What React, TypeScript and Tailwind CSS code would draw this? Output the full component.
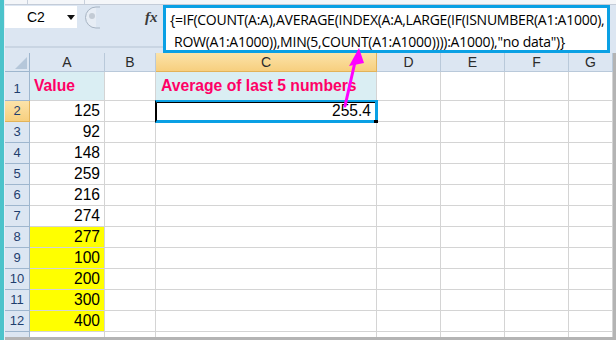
import React from "react";

const values = [125, 92, 148, 259, 216, 274, 277, 100, 200, 300, 400];
const letters = ["A", "B", "C", "D", "E", "F", "G"];

const gridCols = "grid grid-cols-[25px_75px_51px_221px_64px_64px_64px_44px]";

function Cell({ className = "", children }: { className?: string; children?: React.ReactNode }) {
  return (
    <div className={"border-r border-b border-[#d4d4d4] box-border " + className}>{children}</div>
  );
}

export default function App() {
  return (
    <div className="relative w-[616px] h-[340px] overflow-hidden bg-white font-['Liberation_Sans',Arial,sans-serif]">
      <div className="flex h-full">
        <div className="w-[4px] h-full bg-[#4cc3cb]" />
        <div className="w-[1px] h-full bg-[#e6eef6]" />
        <div className="flex flex-col flex-1 min-w-0">
          {/* ribbon bottom strip */}
          <div className="relative h-[5px] bg-[#f4f6f9] border-b border-[#c4ccd8] box-border flex">
            <div className="w-[23px] border-r border-[#c8d0dc]" />
            <div className="w-[57px] border-r border-[#c8d0dc]" />
          </div>
          {/* formula bar */}
          <div className="h-[48px] bg-[#dce6f2] flex relative">
            <div className="w-[158px] shrink-0 flex flex-col">
              <div className="flex items-start h-[43px] border-b-2 border-[#c9d5e3]">
                <div className="mt-[1px] w-[72px] h-[22px] bg-white flex items-center relative">
                  <span className="ml-[22px] text-[14px] text-black">C2</span>
                  <svg className="absolute left-[62px] top-[9px]" width="8" height="5" viewBox="0 0 8 5">
                    <path d="M0 0 L8 0 L4 5 Z" fill="#111" />
                  </svg>
                </div>
                <svg width="20" height="24" viewBox="0 0 20 24" className="ml-[3px] mt-[1px]">
                  <path d="M16 1 A10.5 10.5 0 0 0 16 22" fill="#e7edf5" stroke="#a7b4c3" strokeWidth="1" />
                  <path d="M16 1 L20 1 M16 22 L20 22" stroke="#a7b4c3" strokeWidth="1" />
                  <circle cx="12" cy="10" r="3" fill="#c3cbd5" />
                </svg>
                <span className="ml-[45px] mt-[1px] text-[15px] leading-[22px] italic font-bold text-[#3a3a3a] font-['Liberation_Serif',serif]">
                  fx
                </span>
              </div>
            </div>
            <div className="w-[447px] shrink-0 h-[48px] border-[3px] border-[#0aa0e4] bg-white box-border pl-[4px] pt-[1px] font-['Open_Sans',sans-serif] text-[14px] tracking-[-0.25px] leading-[22px] text-black whitespace-nowrap overflow-hidden">
              <div>{"{=IF(COUNT(A:A),AVERAGE(INDEX(A:A,LARGE(IF(ISNUMBER(A1:A1000),"}</div>
              <div className="pl-[4px]">{'ROW(A1:A1000)),MIN(5,COUNT(A1:A1000)))):A1000),"no data")}'}</div>
            </div>
          </div>
          {/* spreadsheet grid */}
          <div className="h-[284px] overflow-hidden">
            <div className={gridCols}>
              {/* header row */}
              <div className="h-[19px] bg-[#dce6f2] border-r border-b border-[#9eb6ce] relative">
                <svg className="absolute right-[2px] bottom-[2px]" width="12" height="12" viewBox="0 0 12 12">
                  <path d="M12 0 L12 12 L0 12 Z" fill="#b5c7da" />
                </svg>
              </div>
              {letters.map((l) => (
                <div
                  key={l}
                  className={
                    "h-[19px] border-r border-b flex items-center justify-center text-[14px] text-[#2b2b2b] " +
                    (l === "C"
                      ? "bg-gradient-to-b from-[#fbe3a9] to-[#f7cf7e] border-[#e2b35a]"
                      : "bg-[#dce6f2] border-[#b9c9da]")
                  }
                >
                  {l}
                </div>
              ))}
              {/* row 1 */}
              <div className="h-[29px] bg-[#dce6f2] border-r border-b border-[#9eb6ce] flex items-end justify-center pb-[2px] text-[13px] text-[#1f3e6e]">
                1
              </div>
              <Cell className="h-[29px] bg-[#daeef3] flex items-end pl-[4px] pb-[2px]">
                <span className="text-[15.7px] font-bold text-[#ff0066]">Value</span>
              </Cell>
              <Cell className="h-[29px]" />
              <Cell className="h-[29px] bg-[#daeef3] flex items-end pl-[5px] pb-[2px]">
                <span className="text-[15.7px] font-bold text-[#ff0066] whitespace-nowrap">Average of last 5 numbers</span>
              </Cell>
              <Cell className="h-[29px]" />
              <Cell className="h-[29px]" />
              <Cell className="h-[29px]" />
              <Cell className="h-[29px]" />
              {/* rows 2 - 12 */}
              {values.map((v, i) => {
                const row = i + 2;
                const yellow = row >= 8;
                return (
                  <React.Fragment key={row}>
                    <div
                      className={
                        "h-[21px] border-r border-b flex items-center justify-center text-[13px] " +
                        (row === 2
                          ? "bg-gradient-to-b from-[#fbe3a9] to-[#f7cf7e] border-[#e2b35a] text-[#1f3e6e]"
                          : "bg-[#dce6f2] border-[#9eb6ce] text-[#1f3e6e]")
                      }
                    >
                      {row}
                    </div>
                    <Cell
                      className={
                        "h-[21px] flex items-center justify-end pr-[4px] text-[15.6px] text-black " +
                        (yellow ? "bg-[#ffff00]" : "")
                      }
                    >
                      {v}
                    </Cell>
                    <Cell className="h-[21px]" />
                    {row === 2 ? (
                      <Cell className="h-[21px] relative flex items-center justify-end pr-[5px] text-[15.6px] text-black">
                        <div className="absolute -left-[1px] -top-[1px] -right-[2px] -bottom-[2px] border-[3px] border-[#0aa0e4] border-l-[2px] border-l-black" />
                        <div className="absolute left-[1px] top-[1px] right-[1px] h-[1px] bg-black" />
                        <div className="absolute -right-[2px] -bottom-[2px] w-[4px] h-[3px] bg-black" />
                        <span className="relative">255.4</span>
                      </Cell>
                    ) : (
                      <Cell className="h-[21px]" />
                    )}
                    <Cell className="h-[21px]" />
                    <Cell className="h-[21px]" />
                    <Cell className="h-[21px]" />
                    <Cell className="h-[21px]" />
                  </React.Fragment>
                );
              })}
              {/* row 13 partial */}
              <div className="h-[21px] bg-[#dce6f2] border-r border-[#9eb6ce]" />
              <Cell className="h-[21px]" />
              <Cell className="h-[21px]" />
              <Cell className="h-[21px]" />
              <Cell className="h-[21px]" />
              <Cell className="h-[21px]" />
              <Cell className="h-[21px]" />
              <Cell className="h-[21px]" />
            </div>
          </div>
          <div className="h-[3px] bg-[#b4b4b4]" />
        </div>
      </div>
      {/* right shadow */}
      <div className="absolute right-0 top-[53px] bottom-0 w-[3px] bg-[#b4b4b4]" />
      {/* pink arrow */}
      <svg className="absolute left-0 top-0 pointer-events-none" width="616" height="340" viewBox="0 0 616 340">
        <path d="M345 106 L355 62" stroke="#ff00ff" strokeWidth="3" strokeLinecap="round" />
        <path d="M359 48 L349 66 L364 63 Z" fill="#ff00ff" />
      </svg>
    </div>
  );
}
